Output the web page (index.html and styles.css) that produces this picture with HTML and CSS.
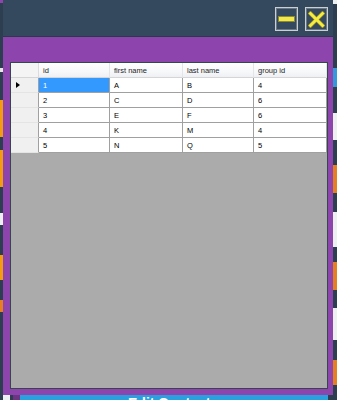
FILE: index.html
```html
<!DOCTYPE html>
<html lang="en">
<head>
    <meta charset="UTF-8">
    <meta name="viewport" content="width=device-width, initial-scale=1.0">
    <title>Contacts</title>
    <link rel="stylesheet" href="styles.css">
</head>
<body>
    <div class="screen">
        <div class="side side-left"></div>

        <div class="window">
            <div class="titlebar">
                <button class="tb-btn" title="Minimize">
                    <svg width="17" height="6" viewBox="0 0 17 6">
                        <rect x="0.5" y="0.5" width="16" height="5" fill="#f3e84a" stroke="#8a8a3a" stroke-width="1"/>
                    </svg>
                </button>
                <button class="tb-btn" title="Close">
                    <svg width="17" height="17" viewBox="0 0 17 17">
                        <path d="M2.5 2.5 L14.5 14.5 M14.5 2.5 L2.5 14.5" stroke="#7d7a33" stroke-width="4.4" stroke-linecap="square"/>
                        <path d="M2.5 2.5 L14.5 14.5 M14.5 2.5 L2.5 14.5" stroke="#f5ec3e" stroke-width="3" stroke-linecap="square"/>
                    </svg>
                </button>
            </div>

            <div class="frame">
                <div class="panel">
                    <div class="grid">
                        <div class="hd corner"></div>
                        <div class="hd">id</div>
                        <div class="hd">first name</div>
                        <div class="hd">last name</div>
                        <div class="hd">group id</div>

                        <div class="rh"><span class="arrow"></span></div>
                        <div class="cell selected">1</div>
                        <div class="cell">A</div>
                        <div class="cell">B</div>
                        <div class="cell">4</div>

                        <div class="rh"></div>
                        <div class="cell">2</div>
                        <div class="cell">C</div>
                        <div class="cell">D</div>
                        <div class="cell">6</div>

                        <div class="rh"></div>
                        <div class="cell">3</div>
                        <div class="cell">E</div>
                        <div class="cell">F</div>
                        <div class="cell">6</div>

                        <div class="rh"></div>
                        <div class="cell">4</div>
                        <div class="cell">K</div>
                        <div class="cell">M</div>
                        <div class="cell">4</div>

                        <div class="rh"></div>
                        <div class="cell">5</div>
                        <div class="cell">N</div>
                        <div class="cell">Q</div>
                        <div class="cell">5</div>
                    </div>
                </div>
            </div>
        </div>

        <div class="side side-right"></div>
    </div>

    <div class="below">
        <div class="below-left"></div>
        <div class="edit-btn">Edit Contact</div>
        <div class="below-right"></div>
    </div>
</body>
</html>
```

FILE: styles.css
```css
* {
    box-sizing: border-box;
}

body {
    margin: 0;
    width: 337px;
    height: 400px;
    overflow: hidden;
    background-color: #2c3e50;
    font-family: "Liberation Sans", Arial, sans-serif;
}

.screen {
    display: flex;
    height: 395px;
}

/* bits of the app behind the dialog */
.side {
    flex: none;
    height: 100%;
}
.side-left {
    width: 3px;
    background: linear-gradient(to bottom,
        #8e44ad 0, #8e44ad 3px,
        #2c3e50 3px, #2c3e50 68px,
        #e8e8e8 68px, #e8e8e8 72px,
        #2c3e50 72px, #2c3e50 100px,
        #f39c12 100px, #f39c12 137px,
        #2c3e50 137px, #2c3e50 150px,
        #f39c12 150px, #f39c12 187px,
        #2c3e50 187px, #2c3e50 213px,
        #ecf0f1 213px, #ecf0f1 225px,
        #2c3e50 225px, #2c3e50 255px,
        #f39c12 255px, #f39c12 280px,
        #2c3e50 280px, #2c3e50 300px,
        #e67e22 300px, #e67e22 312px,
        #2c3e50 312px);
}
.side-right {
    width: 4px;
    background: linear-gradient(to bottom,
        #ecf0f1 0, #ecf0f1 4px,
        #2c3e50 4px, #2c3e50 68px,
        #3498db 68px, #3498db 87px,
        #2c3e50 87px, #2c3e50 113px,
        #ecf0f1 113px, #ecf0f1 140px,
        #2c3e50 140px, #2c3e50 165px,
        #e67e22 165px, #e67e22 193px,
        #2c3e50 193px, #2c3e50 212px,
        #ecf0f1 212px, #ecf0f1 247px,
        #2c3e50 247px, #2c3e50 262px,
        #e67e22 262px, #e67e22 290px,
        #2c3e50 290px, #2c3e50 308px,
        #ecf0f1 308px, #ecf0f1 340px,
        #2c3e50 340px, #2c3e50 360px,
        #e67e22 360px, #e67e22 385px,
        #2c3e50 385px);
}

.window {
    width: 330px;
    flex: none;
    display: flex;
    flex-direction: column;
}

.titlebar {
    height: 37px;
    background-color: #34495e;
    border-bottom: 1px solid #2a3a4a;
    display: flex;
    justify-content: flex-end;
    align-items: flex-start;
    gap: 7px;
    padding: 7px 5px 0 0;
}

.tb-btn {
    width: 23px;
    height: 24px;
    padding: 0;
    margin: 0;
    background-color: #34495e;
    border: 1px solid #c9cfd2;
    box-shadow: inset 0 0 0 1px #6b7884;
    display: flex;
    align-items: center;
    justify-content: center;
    cursor: pointer;
}

.frame {
    flex: 1;
    background-color: #8e44ad;
    padding: 25px 5px 6px 7px;
    display: flex;
}

.panel {
    flex: 1;
    background-color: #ababab;
    border: 1px solid #35474a;
}

.grid {
    display: grid;
    grid-template-columns: 28px 71px 73px 71px 73px;
    grid-auto-rows: 15px;
    font-size: 7.5px;
    color: #000;
}

.hd {
    background: linear-gradient(to bottom, #ffffff 0%, #f7f8fa 60%, #eef0f3 100%);
    border-right: 1px solid #e3e5e8;
    border-bottom: 1px solid #d5d5d5;
    padding: 0 4px;
    display: flex;
    align-items: center;
    color: #1e1e1e;
}
.hd.corner {
    background: #f4f4f4;
    border-right: 1px solid #dcdcdc;
}

.rh {
    background-color: #f0f0f0;
    border-right: 1px solid #a0a0a0;
    border-bottom: 1px solid #e4e4e4;
    display: flex;
    align-items: center;
    padding-left: 5px;
}

.arrow {
    width: 0;
    height: 0;
    border-left: 4px solid #000;
    border-top: 3px solid transparent;
    border-bottom: 3px solid transparent;
}

.cell {
    background-color: #ffffff;
    border-right: 1px solid #a0a0a0;
    border-bottom: 1px solid #a0a0a0;
    padding: 0 4px;
    display: flex;
    align-items: center;
}
.cell.selected {
    background-color: #3399ff;
    color: #ffffff;
}

.below {
    height: 5px;
    display: flex;
    overflow: hidden;
}
.below-left {
    width: 20px;
    flex: none;
    background: linear-gradient(to right, #2c3e50 0, #2c3e50 3px, #ecf0f1 3px, #ecf0f1 10px, #2c3e50 10px, #2c3e50 13px, #6c3483 13px);
}
.edit-btn {
    width: 308px;
    flex: none;
    background-color: #2aa1de;
    color: #ffffff;
    font-weight: bold;
    font-size: 14px;
    line-height: 14px;
    padding: 1px 0 0 108px;
    white-space: nowrap;
}
.below-right {
    flex: 1;
    background-color: #2c3e50;
}
```
